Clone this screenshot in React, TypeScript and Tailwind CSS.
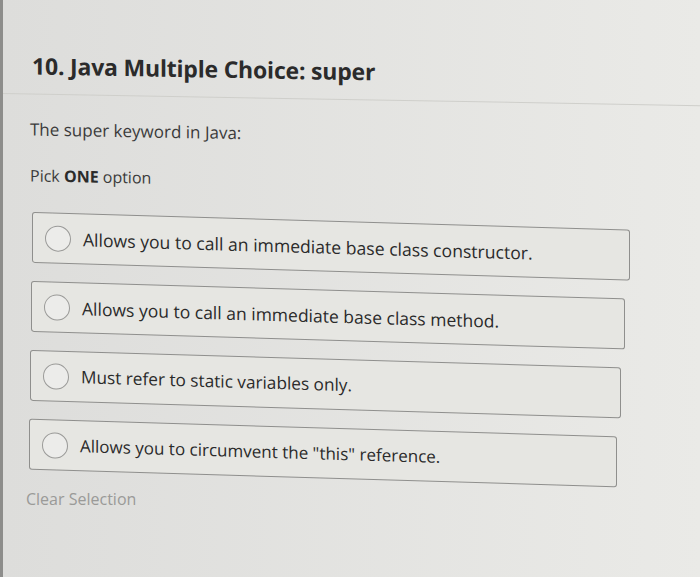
const options = [
  { text: "Allows you to call an immediate base class constructor.", ml: "ml-[29px]", w: "w-[598px]", size: "text-[17.6px]" },
  { text: "Allows you to call an immediate base class method.", ml: "ml-[28px]", w: "w-[594px]", size: "text-[17.5px]" },
  { text: "Must refer to static variables only.", ml: "ml-[27px]", w: "w-[591px]", size: "text-[17.2px]" },
  { text: 'Allows you to circumvent the "this" reference.', ml: "ml-[26px]", w: "w-[588px]", size: "text-[17px]" },
];

export default function App() {
  return (
    <div className="h-[577px] w-[700px] overflow-hidden border-l-[3px] border-[#8d8d8b] bg-gradient-to-r from-[#dddddb] to-[#eaeae7] font-['Open_Sans',sans-serif] text-[#2f2f2f]">
      <div className="origin-top-left skew-y-[1deg]">
        <h1 className="pl-[29px] pt-[49px] text-[23px] font-bold leading-[32px] tracking-[-0.2px] text-[#2b2b2b]">
          10. Java Multiple Choice: super
        </h1>
        <div className="mt-[12px] h-px w-[720px] bg-[#cfcfcb]" />
        <p className="mt-[23px] pl-[27px] text-[17px] leading-[24px] text-[#3a3a3a]">
          The super keyword in Java:
        </p>
        <p className="mt-[23px] pl-[27px] text-[16px] leading-[22px] text-[#3a3a3a]">
          Pick <span className="font-bold text-[#2b2b2b]">ONE</span> option
        </p>
      </div>
      <div className="mt-[25px] flex origin-top-left skew-y-[1.7deg] flex-col gap-[18px]">
        {options.map((o) => (
          <div
            key={o.text}
            className={`flex h-[51px] ${o.ml} ${o.w} items-center gap-[12px] rounded-[3px] border border-[#8f8f8d] bg-[#e6e6e2] pl-[12px]`}
          >
            <span className="h-[26px] w-[26px] shrink-0 rounded-full border-[1.5px] border-[#9a9a98] bg-[#ececea]" />
            <span className={`${o.size} leading-[24px] text-[#2a2a2a]`}>{o.text}</span>
          </div>
        ))}
      </div>
      <p className="mt-[19px] pl-[23px] text-[16px] leading-[22px] text-[#9a9a98]">
        Clear Selection
      </p>
    </div>
  );
}
